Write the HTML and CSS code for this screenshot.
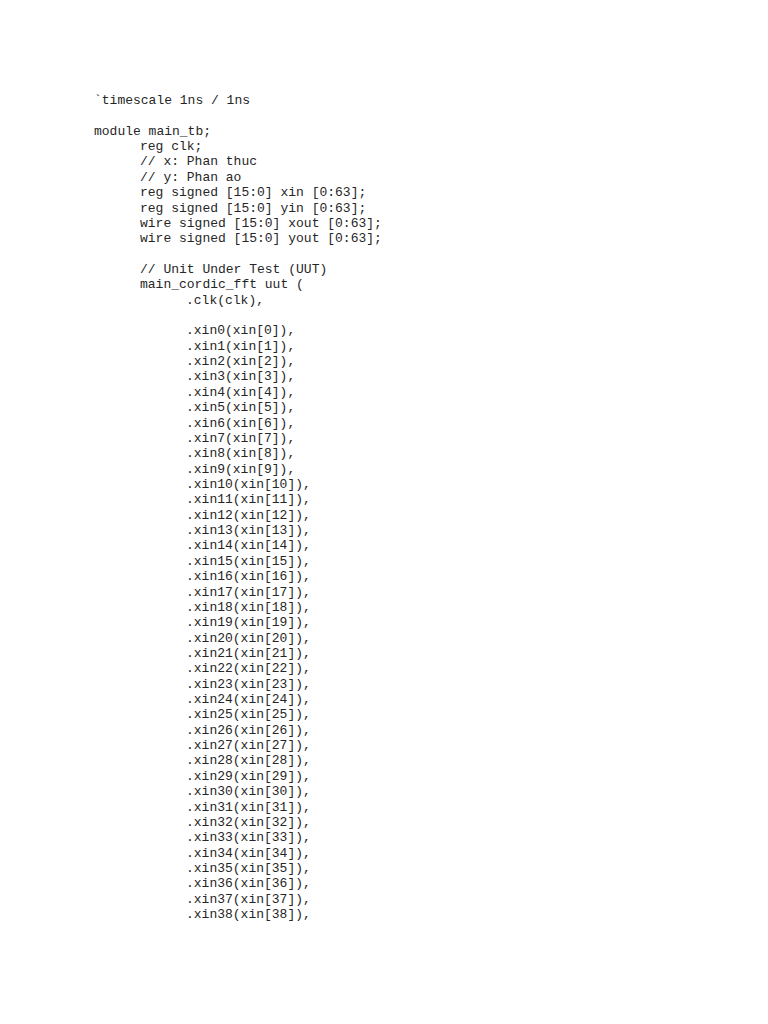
FILE: index.html
```html
<!DOCTYPE html>
<html>
<head>
<meta charset="utf-8">
<link rel="stylesheet" href="styles.css">
</head>
<body>
<div class="page">
<div class="code">
<div class="ln">`timescale 1ns / 1ns</div>
<div class="ln"> </div>
<div class="ln">module main_tb;</div>
<div class="ln i1">reg clk;</div>
<div class="ln i1">// x: Phan thuc</div>
<div class="ln i1">// y: Phan ao</div>
<div class="ln i1">reg signed [15:0] xin [0:63];</div>
<div class="ln i1">reg signed [15:0] yin [0:63];</div>
<div class="ln i1">wire signed [15:0] xout [0:63];</div>
<div class="ln i1">wire signed [15:0] yout [0:63];</div>
<div class="ln"> </div>
<div class="ln i1">// Unit Under Test (UUT)</div>
<div class="ln i1">main_cordic_fft uut (</div>
<div class="ln i2">.clk(clk),</div>
<div class="ln"> </div>
<div class="ln i2">.xin0(xin[0]),</div>
<div class="ln i2">.xin1(xin[1]),</div>
<div class="ln i2">.xin2(xin[2]),</div>
<div class="ln i2">.xin3(xin[3]),</div>
<div class="ln i2">.xin4(xin[4]),</div>
<div class="ln i2">.xin5(xin[5]),</div>
<div class="ln i2">.xin6(xin[6]),</div>
<div class="ln i2">.xin7(xin[7]),</div>
<div class="ln i2">.xin8(xin[8]),</div>
<div class="ln i2">.xin9(xin[9]),</div>
<div class="ln i2">.xin10(xin[10]),</div>
<div class="ln i2">.xin11(xin[11]),</div>
<div class="ln i2">.xin12(xin[12]),</div>
<div class="ln i2">.xin13(xin[13]),</div>
<div class="ln i2">.xin14(xin[14]),</div>
<div class="ln i2">.xin15(xin[15]),</div>
<div class="ln i2">.xin16(xin[16]),</div>
<div class="ln i2">.xin17(xin[17]),</div>
<div class="ln i2">.xin18(xin[18]),</div>
<div class="ln i2">.xin19(xin[19]),</div>
<div class="ln i2">.xin20(xin[20]),</div>
<div class="ln i2">.xin21(xin[21]),</div>
<div class="ln i2">.xin22(xin[22]),</div>
<div class="ln i2">.xin23(xin[23]),</div>
<div class="ln i2">.xin24(xin[24]),</div>
<div class="ln i2">.xin25(xin[25]),</div>
<div class="ln i2">.xin26(xin[26]),</div>
<div class="ln i2">.xin27(xin[27]),</div>
<div class="ln i2">.xin28(xin[28]),</div>
<div class="ln i2">.xin29(xin[29]),</div>
<div class="ln i2">.xin30(xin[30]),</div>
<div class="ln i2">.xin31(xin[31]),</div>
<div class="ln i2">.xin32(xin[32]),</div>
<div class="ln i2">.xin33(xin[33]),</div>
<div class="ln i2">.xin34(xin[34]),</div>
<div class="ln i2">.xin35(xin[35]),</div>
<div class="ln i2">.xin36(xin[36]),</div>
<div class="ln i2">.xin37(xin[37]),</div>
<div class="ln i2">.xin38(xin[38]),</div>
</div>
</div>
</body>
</html>
```

FILE: styles.css
```css
html, body {
  margin: 0;
  padding: 0;
  background: #ffffff;
}
.page {
  width: 768px;
  height: 1024px;
  box-sizing: border-box;
  padding: 93px 0 0 94px;
  overflow: hidden;
}
.code {
  font-family: "Liberation Mono", "Courier New", monospace;
  font-size: 13px;
  line-height: 15.36px;
  color: #262626;
}
.ln {
  white-space: pre;
  height: 15.36px;
}
.i1 {
  padding-left: 46px;
}
.i2 {
  padding-left: 92px;
}
```
